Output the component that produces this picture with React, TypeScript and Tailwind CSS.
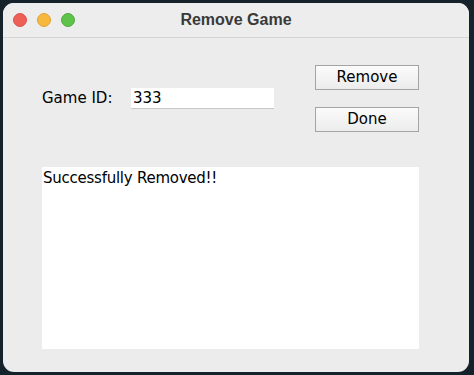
export default function App() {
  const ui = { fontFamily: '"DejaVu Sans", "Noto Sans", sans-serif' };

  return (
    <div className="w-[474px] h-[375px] bg-[#15212b] overflow-hidden pt-[3px] pl-[3px]">
      <div className="w-[466px] h-[369px] rounded-[11px] bg-[#ececec] flex flex-col overflow-hidden">
        {/* title bar */}
        <div className="relative h-[35px] shrink-0 flex items-center border-b border-[#d4d4d4] bg-[#ededed]">
          <div className="flex items-center gap-[10px] pl-[10px]">
            <span className="w-[14px] h-[14px] rounded-full bg-[#ee5f57] border border-[#d9544e]" />
            <span className="w-[14px] h-[14px] rounded-full bg-[#f6b93d] border border-[#dea236]" />
            <span className="w-[14px] h-[14px] rounded-full bg-[#5fc24a] border border-[#52ab40]" />
          </div>
          <span
            className="absolute left-0 right-0 text-center text-[16px] font-bold text-[#3a3a3a]"
            style={{ fontFamily: '"Liberation Sans", Arial, sans-serif' }}
          >
            Remove Game
          </span>
        </div>

        {/* form */}
        <div className="flex pl-[39px] pt-[27px]" style={ui}>
          <div className="flex items-center h-[67px] w-[273px]">
            <span className="text-[15px] text-black w-[89px]">Game ID:</span>
            <div className="w-[143px] h-[21px] bg-white border-b border-[#c8c8c8] flex items-center pl-[2px] text-[15px] text-black">
              333
            </div>
          </div>
          <div className="flex flex-col gap-[17px]">
            <button className="w-[104px] h-[25px] border border-[#a4a4a4] bg-gradient-to-b from-[#fbfbfb] to-[#ececec] text-[15px] text-black leading-none">
              Remove
            </button>
            <button className="w-[104px] h-[25px] border border-[#a4a4a4] bg-gradient-to-b from-[#fbfbfb] to-[#ececec] text-[15px] text-black leading-none">
              Done
            </button>
          </div>
        </div>

        {/* output area */}
        <div className="ml-[39px] mt-[35px] w-[377px] h-[182px] bg-white px-[1px] text-[15px] tracking-[-0.25px] text-black" style={ui}>
          Successfully Removed!!
        </div>
      </div>
    </div>
  );
}
